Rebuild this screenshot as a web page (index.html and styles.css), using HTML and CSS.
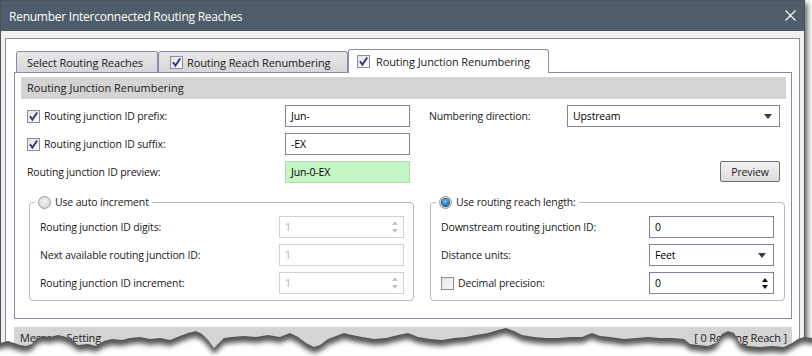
FILE: index.html
```html
<!DOCTYPE html>
<html>
<head>
<meta charset="utf-8">
<link rel="stylesheet" href="styles.css">
</head>
<body>
<div class="window">
  <div class="titlebar">
    <span class="title">Renumber Interconnected Routing Reaches</span>
    <svg class="close" width="11" height="11" viewBox="0 0 11 11"><path d="M0.5 0.5 L10.5 10.5 M10.5 0.5 L0.5 10.5" stroke="#fff" stroke-width="1.1" fill="none"/></svg>
  </div>
  <div class="client">
    <div class="outer">
      <div class="tabs">
        <div class="tab tab-select">Select Routing Reaches</div>
        <div class="tab tab-reach"><span class="cb"><svg width="11" height="11" viewBox="0 0 11 11"><path d="M2 5.2 L4.4 8.6 L9.2 1.6" stroke="#2e2e86" stroke-width="1.8" fill="none"/></svg></span>Routing Reach Renumbering</div>
        <div class="tab active"><span class="cb"><svg width="11" height="11" viewBox="0 0 11 11"><path d="M2 5.2 L4.4 8.6 L9.2 1.6" stroke="#2e2e86" stroke-width="1.8" fill="none"/></svg></span>Routing Junction Renumbering</div>
      </div>
      <div class="tabpanel">
        <div class="header">Routing Junction Renumbering</div>
        <div class="content">
          <div class="topgrid">
            <label class="lbl"><span class="cb"><svg width="11" height="11" viewBox="0 0 11 11"><path d="M2 5.2 L4.4 8.6 L9.2 1.6" stroke="#2e2e86" stroke-width="1.8" fill="none"/></svg></span>Routing junction ID prefix:</label>
            <div class="field">Jun-</div>
            <div></div>
            <div class="lbl">Numbering direction:</div>
            <div class="field combo">Upstream<span class="arrow"></span></div>

            <label class="lbl"><span class="cb"><svg width="11" height="11" viewBox="0 0 11 11"><path d="M2 5.2 L4.4 8.6 L9.2 1.6" stroke="#2e2e86" stroke-width="1.8" fill="none"/></svg></span>Routing junction ID suffix:</label>
            <div class="field">-EX</div>
            <div></div>
            <div></div>
            <div></div>

            <div class="lbl">Routing junction ID preview:</div>
            <div class="field preview">Jun-0-EX</div>
            <div></div>
            <div></div>
            <div class="btnwrap"><div class="button">Preview</div></div>
          </div>

          <div class="groups">
            <fieldset class="group">
              <legend><span class="radio"></span>Use auto increment</legend>
              <div class="grows">
                <div class="lbl">Routing junction ID digits:</div>
                <div class="field disabled">1<span class="spin"><i class="up"></i><i class="down"></i></span></div>
                <div class="lbl">Next available routing junction ID:</div>
                <div class="field disabled">1</div>
                <div class="lbl">Routing junction ID increment:</div>
                <div class="field disabled">1<span class="spin"><i class="up"></i><i class="down"></i></span></div>
              </div>
            </fieldset>
            <fieldset class="group group-right">
              <legend><span class="radio"><span class="dot"></span></span>Use routing reach length:</legend>
              <div class="grows">
                <div class="lbl">Downstream routing junction ID:</div>
                <div class="field">0</div>
                <div class="lbl">Distance units:</div>
                <div class="field combo">Feet<span class="arrow"></span></div>
                <label class="lbl"><span class="cb"></span>Decimal precision:</label>
                <div class="field">0<span class="spin dark"><i class="up"></i><i class="down"></i></span></div>
              </div>
            </fieldset>
          </div>
        </div>
      </div>
      <div class="statusbar"><span>Message Setting</span><span>[ 0 Routing Reach ]</span></div>
    </div>
  </div>
</div>

<svg class="tear" width="812" height="36" viewBox="0 320 812 36">
  <defs>
    <filter id="soft" x="-5%" y="-60%" width="110%" height="220%"><feGaussianBlur stdDeviation="2.6"/></filter>
    <clipPath id="below"><polygon points="0,343 8,341 14,343 20,345 26,346 32,344 36,339 42,336 50,337 58,335 66,337 72,340 78,345 88,344 96,346 104,341 112,339 122,340 130,338 140,337 150,339 160,338 170,340 180,336 188,333 196,331 202,334 208,340 214,348 218,344 224,338 232,337 244,336 256,337 268,335 280,337 290,333 298,337 306,343 314,347 320,345 328,339 336,336 344,333 352,335 362,337 374,339 386,338 398,335 408,333 418,337 430,339 442,340 454,338 466,337 476,335 488,333 498,330 506,328 514,331 522,335 534,337 546,338 558,338 570,337 582,337 592,333 600,336 610,337 624,339 636,338 648,337 660,338 672,338 684,339 690,344 698,345 708,346 716,343 722,334 728,331 734,333 740,343 748,346 760,347 772,346 784,347 792,343 798,339 804,337 812,338 812,356 0,356"/></clipPath>
  </defs>
  <g clip-path="url(#below)">
    <rect x="0" y="320" width="812" height="36" fill="#555"/>
    <polygon transform="translate(0,6)" filter="url(#soft)" fill="#fff" points="-30,343 0,343 8,341 14,343 20,345 26,346 32,344 36,339 42,336 50,337 58,335 66,337 72,340 78,345 88,344 96,346 104,341 112,339 122,340 130,338 140,337 150,339 160,338 170,340 180,336 188,333 196,331 202,334 208,340 214,348 218,344 224,338 232,337 244,336 256,337 268,335 280,337 290,333 298,337 306,343 314,347 320,345 328,339 336,336 344,333 352,335 362,337 374,339 386,338 398,335 408,333 418,337 430,339 442,340 454,338 466,337 476,335 488,333 498,330 506,328 514,331 522,335 534,337 546,338 558,338 570,337 582,337 592,333 600,336 610,337 624,339 636,338 648,337 660,338 672,338 684,339 690,344 698,345 708,346 716,343 722,334 728,331 734,333 740,343 748,346 760,347 772,346 784,347 792,343 798,339 804,337 812,338 842,338 842,390 -30,390"/>
  </g>
</svg>
</body>
</html>
```

FILE: styles.css
```css
* { box-sizing: border-box; }

body {
  margin: 0;
  width: 812px;
  height: 356px;
  overflow: hidden;
  position: relative;
  background: #fff;
  font-family: "Open Sans", "Noto Sans", sans-serif;
  font-size: 10.5px;
  letter-spacing: -0.15px;
  color: #1a1a1a;
}

.window {
  width: 805px;
  height: 390px;
  border: 1px solid #4a525c;
  box-shadow: 3px 3px 5px rgba(0, 0, 0, 0.55);
  background: #f0f0f0;
  display: flex;
  flex-direction: column;
}

.titlebar {
  height: 30px;
  flex: none;
  background: #505c6a;
  color: #fff;
  display: flex;
  align-items: center;
  justify-content: space-between;
  padding: 0 8px 0 8px;
  font-size: 12px;
  letter-spacing: -0.25px;
}

.close { display: block; margin-top: -1px; }

.client {
  flex: 1;
  padding: 7px 4px 0 4px;
}

.outer {
  height: 100%;
  border: 1px solid #8d8d9b;
  background: #fff;
  padding: 10px 7px 0 8px;
}

.tabs {
  display: flex;
  align-items: flex-end;
  height: 23px;
  padding-left: 2px;
  position: relative;
  z-index: 2;
  font-size: 11px;
  letter-spacing: -0.1px;
}

.tab {
  height: 21px;
  border: 1px solid #8c8ca0;
  border-bottom: 0;
  border-radius: 3px 3px 0 0;
  background: linear-gradient(#e8e8e8, #d6d6d6);
  display: flex;
  align-items: center;
  white-space: nowrap;
  flex: none;
}

.tab-select { width: 142px; padding-left: 10px; }
.tab-reach { width: 190px; padding-left: 11px; }

.tab.active {
  width: 201px;
  height: 24px;
  margin-bottom: -1px;
  padding-left: 8px;
  padding-bottom: 1px;
  background: #fff;
}
.tab.active .cb { margin-right: 6px; }

.cb {
  width: 13px;
  height: 13px;
  flex: none;
  border: 1px solid #8b8c9c;
  background: linear-gradient(135deg, #e4e4e4, #fafafa);
  margin-right: 4px;
  display: inline-flex;
  align-items: center;
  justify-content: center;
}
.cb svg { display: block; }

.tabpanel {
  height: 247px;
  border: 1px solid #8c8ca0;
  padding: 4px 5px 0 6px;
}

.header {
  height: 22px;
  line-height: 22px;
  background: #d4d4d4;
  padding-left: 6px;
  font-size: 11px;
  letter-spacing: 0;
}

.content {
  padding: 6px 5px 0 6px;
}

.topgrid {
  display: grid;
  grid-template-columns: 258px 125px 19px 138px 213px;
  grid-auto-rows: 22px;
  row-gap: 6px;
}

.lbl {
  display: flex;
  align-items: center;
  white-space: nowrap;
}

.field {
  position: relative;
  border: 1px solid #82829a;
  background: #fff;
  display: flex;
  align-items: center;
  padding-left: 5px;
  color: #000;
}

.field.preview {
  background: #c6f5c6;
  border-color: #b0d8b0;
}

.field.disabled {
  border-color: #d0d0d8;
  color: #b0b0b0;
}

.combo .arrow {
  position: absolute;
  right: 7px;
  top: 8px;
  width: 0;
  height: 0;
  border-left: 4.5px solid transparent;
  border-right: 4.5px solid transparent;
  border-top: 5px solid #3a3a3a;
}

.spin {
  position: absolute;
  right: 5px;
  top: 4px;
  display: flex;
  flex-direction: column;
  gap: 4px;
}
.spin i {
  display: block;
  width: 0;
  height: 0;
  border-left: 3.5px solid transparent;
  border-right: 3.5px solid transparent;
}
.spin .up { border-bottom: 4px solid #c4c4c8; }
.spin .down { border-top: 4px solid #c4c4c8; }
.spin.dark { gap: 3px; top: 5px; }
.spin.dark .up { border-bottom-color: #111; }
.spin.dark .down { border-top-color: #111; }

.btnwrap {
  display: flex;
  justify-content: flex-end;
}

.button {
  width: 60px;
  height: 21px;
  border: 1px solid #707070;
  border-radius: 2px;
  background: linear-gradient(#f4f4f4, #dcdcdc);
  display: flex;
  align-items: center;
  justify-content: center;
}

.groups {
  display: grid;
  grid-template-columns: 385px 1fr;
  column-gap: 16px;
  margin: 11px -4px 0 2px;
}

.group {
  margin: 0;
  min-width: 0;
  border: 1px solid #b9b9c3;
  border-radius: 4px;
  padding: 6px 9px 6px 10px;
}
.group-right { padding-right: 10px; }

.group legend {
  padding: 0 3px;
  margin-left: -5px;
  height: 16px;
  display: flex;
  align-items: center;
}

.radio {
  width: 13px;
  height: 13px;
  border-radius: 50%;
  border: 1px solid #9a9aa4;
  background: radial-gradient(circle at 50% 40%, #f4f4f4, #cdcdd2);
  margin-right: 4px;
  display: inline-flex;
  align-items: center;
  justify-content: center;
}
.radio .dot {
  width: 7px;
  height: 7px;
  border-radius: 50%;
  background: radial-gradient(circle at 45% 35%, #7fd0ff, #1e78c0 60%, #0d3f70);
  box-shadow: 0 0 0 1px #2b4f70;
}

.grows {
  display: grid;
  grid-template-columns: 1fr 125px;
  grid-auto-rows: 22px;
  row-gap: 6px;
}

.statusbar {
  margin-top: 8px;
  height: 20px;
  background: #d4d4d4;
  display: flex;
  align-items: center;
  justify-content: space-between;
  padding: 0 5px 0 6px;
  font-size: 11px;
}

.tear {
  position: absolute;
  left: 0;
  top: 320px;
  display: block;
}
```
